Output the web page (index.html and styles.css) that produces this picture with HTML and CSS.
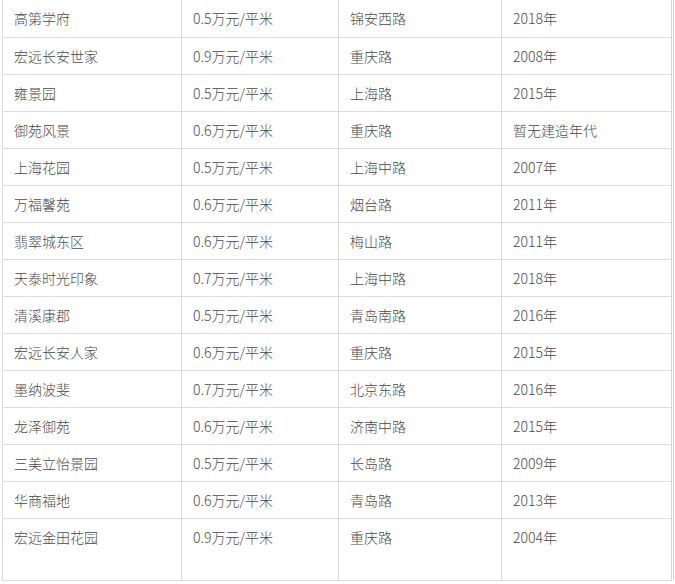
FILE: index.html
```html
<!DOCTYPE html>
<html lang="zh-CN">
<head>
<meta charset="utf-8">
<link rel="stylesheet" href="styles.css">
</head>
<body>
<div class="wrap">
<table class="grid">
<colgroup><col class="c1"><col class="c2"><col class="c3"><col class="c4"></colgroup>
<tbody>
<tr class="first"><td>高第学府</td><td>0.5万元/平米</td><td>锦安西路</td><td>2018年</td></tr>
<tr><td>宏远长安世家</td><td>0.9万元/平米</td><td>重庆路</td><td>2008年</td></tr>
<tr><td>雍景园</td><td>0.5万元/平米</td><td>上海路</td><td>2015年</td></tr>
<tr><td>御苑风景</td><td>0.6万元/平米</td><td>重庆路</td><td>暂无建造年代</td></tr>
<tr><td>上海花园</td><td>0.5万元/平米</td><td>上海中路</td><td>2007年</td></tr>
<tr><td>万福馨苑</td><td>0.6万元/平米</td><td>烟台路</td><td>2011年</td></tr>
<tr><td>翡翠城东区</td><td>0.6万元/平米</td><td>梅山路</td><td>2011年</td></tr>
<tr><td>天泰时光印象</td><td>0.7万元/平米</td><td>上海中路</td><td>2018年</td></tr>
<tr><td>清溪康郡</td><td>0.5万元/平米</td><td>青岛南路</td><td>2016年</td></tr>
<tr><td>宏远长安人家</td><td>0.6万元/平米</td><td>重庆路</td><td>2015年</td></tr>
<tr><td>墨纳波斐</td><td>0.7万元/平米</td><td>北京东路</td><td>2016年</td></tr>
<tr><td>龙泽御苑</td><td>0.6万元/平米</td><td>济南中路</td><td>2015年</td></tr>
<tr><td>三美立怡景园</td><td>0.5万元/平米</td><td>长岛路</td><td>2009年</td></tr>
<tr><td>华商福地</td><td>0.6万元/平米</td><td>青岛路</td><td>2013年</td></tr>
<tr class="last"><td>宏远金田花园</td><td>0.9万元/平米</td><td>重庆路</td><td>2004年</td></tr>
</tbody>
</table>
</div>
</body>
</html>
```
FILE: styles.css
```css
html, body {
  margin: 0;
  padding: 0;
  background: #ffffff;
}
.wrap {
  padding: 0 0 0 2px;
  width: 672px;
}
.grid {
  border-collapse: collapse;
  table-layout: fixed;
  width: 670px;
  font-family: "Noto Sans CJK SC", "Microsoft YaHei", sans-serif;
  font-size: 14px;
  font-weight: 300;
  color: #4a4a4a;
  border-right: 3px double #d6d6d6;
}
.c1 { width: 179px; }
.c2 { width: 157px; }
.c3 { width: 163px; }
.c4 { width: 171px; }
.grid td {
  border: 1px solid #dcdcdc;
  padding: 8px 10px 8px 11px;
  line-height: 20px;
  vertical-align: top;
  white-space: nowrap;
}
.grid tr.first td {
  border-top: none;
  padding-bottom: 9px;
}
.grid tr.last td {
  padding-bottom: 33px;
}
```
